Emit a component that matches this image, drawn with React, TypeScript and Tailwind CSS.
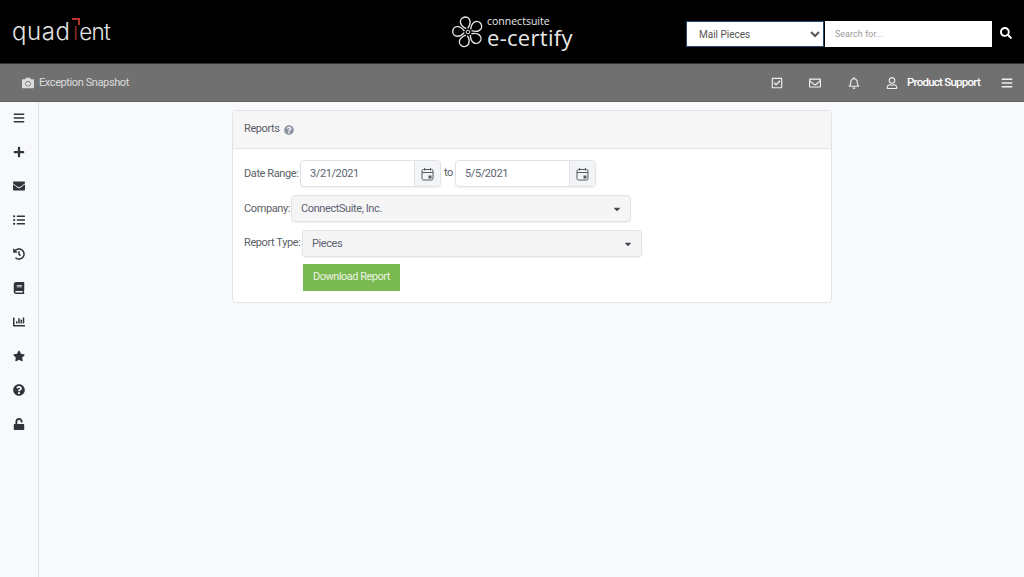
import { FaBars, FaPlus, FaEnvelope, FaListUl, FaHistory, FaBook, FaChartBar, FaStar, FaQuestionCircle, FaUnlock, FaCamera, FaSearch, FaRegCheckSquare, FaRegEnvelope, FaRegBell, FaRegUser, FaCaretDown } from "react-icons/fa";

const Cal = () => (
  <svg width="13" height="14" viewBox="0 0 13 14" fill="none" stroke="#555b66" strokeWidth="1">
    <rect x="1" y="2.5" width="11" height="10.5" rx="1.5" />
    <path d="M1 5.5h11M3.5 1v2.5M9.500 1v2.500" />
    <rect x="7.500" y="8.500" width="3" height="3" fill="#555b66" stroke="none" />
  </svg>
);

const petal = "M15.200 12.300 C13 10.500 11.200 8 11.200 5.500 A4.800 4.800 0 0 1 20.800 5.500 C20.800 8 19 10.500 16.800 12.300";
const Logo = () => (
  <svg width="32" height="32" viewBox="0 0 32 32" fill="none" stroke="#e8e8e8" strokeWidth="1.400">
    {[-15, 57, 129, 201, 273].map((r) => (
      <path key={r} d={petal} transform={`rotate(${r} 16 16)`} />
    ))}
    <circle cx="16" cy="16" r="1.800" strokeWidth="1" />
  </svg>
);

const side = [FaBars, FaPlus, FaEnvelope, FaListUl, FaHistory, FaBook, FaChartBar, FaStar, FaQuestionCircle, FaUnlock];

const DateInput = ({ value }: { value: string }) => (
  <div className="flex h-[27px] w-[141px] rounded-[4px] border border-[#e1e3e6] bg-white shadow-[0_1px_2px_rgba(0,0,0,0.06)]">
    <div className="flex-1 pl-[9px] leading-[25px] text-[#5c6370]">{value}</div>
    <div className="flex w-[26px] items-center justify-center rounded-r-[4px] border-l border-[#e1e3e6] bg-[#f3f4f5]"><Cal /></div>
  </div>
);

const FakeSelect = ({ value }: { value: string }) => (
  <div className="flex h-[27px] w-[340px] items-center justify-between rounded-[4px] border border-[#e1e3e6] bg-[#f5f5f6] pl-[9px] pr-[8px] text-[#5c6370] shadow-[0_1px_2px_rgba(0,0,0,0.06)]">
    <span className="pt-[1px]">{value}</span>
    <FaCaretDown className="text-[10px] text-[#444b55]" />
  </div>
);

export default function App() {
  return (
    <div className="flex h-[577px] w-[1024px] flex-col overflow-hidden whitespace-nowrap bg-[#f8f9fc] font-['Roboto',sans-serif] text-[11px] tracking-[-0.4px] text-[#5a5f68]">
      <header className="flex h-[64px] items-center border-b border-[#333] bg-black tracking-normal">
        <div className="flex w-[440px] items-center pl-[12px]">
          <span className="font-['Inter',sans-serif] text-[24px] font-light leading-none text-[#e4e4e4]">
            <span className="tracking-[0.6px]">quad</span>
            <span className="relative ml-[2px] mr-[1px] text-[#8a2a26]">i<span className="absolute left-[-1px] top-[1px] h-[7px] w-[8px] border-r-2 border-t-2 border-[#b8322a] bg-black" /></span>
            <span className="text-[22.500px] tracking-[-0.8px]">ent</span>
          </span>
        </div>
        <div className="flex w-[246px] items-center">
          <div className="ml-[12px]"><Logo /></div>
          <div className="ml-[3px] mt-[1px] flex flex-col font-['Open_Sans',sans-serif] text-[#e8e8e8]">
            <span className="text-[10.500px] leading-[11px]">connectsuite</span>
            <span className="text-[22px] leading-[21px] tracking-[0.3px]">e-certify</span>
          </div>
        </div>
        <select defaultValue="Mail Pieces" className="mt-[4px] h-[26px] w-[138px] border border-[#27496d] bg-white pl-[8px] pt-[1px] text-[10px] text-[#555]">
          <option>Mail Pieces</option>
        </select>
        <input placeholder="Search for..." className="ml-[1px] mt-[4px] h-[26px] w-[167px] bg-white px-[10px] pt-[1px] text-[9px] placeholder:text-[#9a9a9a]" />
        <FaSearch className="ml-[8px] mt-[3px] text-[12px] text-white" />
      </header>

      <div className="flex h-[38px] items-center border-b border-[#616161] bg-[#707070] text-[#dcdcdc]">
        <FaCamera className="ml-[22px] text-[12px]" />
        <span className="ml-[5px] pt-[1px]">Exception Snapshot</span>
        <div className="ml-auto flex items-center text-[#f0f0f0]">
          <FaRegCheckSquare className="text-[12px]" />
          <FaRegEnvelope className="ml-[26px] text-[12px]" />
          <FaRegBell className="ml-[27px] text-[12px]" />
          <FaRegUser className="ml-[26px] text-[12px]" />
          <span className="ml-[9px] text-[11.500px] font-medium tracking-[-0.75px] text-white">Product Support</span>
          <FaBars className="ml-[21px] mr-[11px] text-[12px]" />
        </div>
      </div>

      <div className="flex min-h-0 flex-1">
        <aside className="flex w-[39px] flex-col items-center gap-[20px] border-r border-[#dfe2e8] pt-[9px] text-[#30343a]">
          {side.map((I, i) => (
            <div key={i} className="flex h-[14px] items-center justify-center"><I className="text-[12px]" /></div>
          ))}
        </aside>
        <main className="flex-1 pl-[193px] pt-[8px]">
          <section className="h-[193px] w-[600px] rounded-[4px] border border-[#e3e4e6] bg-white">
            <div className="flex h-[38px] items-center border-b border-[#e3e4e6] bg-[#f6f6f6] pl-[11px]">
              <span>Reports</span>
              <FaQuestionCircle className="ml-[4px] text-[10px] text-[#8d95a5]" />
            </div>
            <div className="flex flex-col gap-[8px] pl-[11px] pt-[11px]">
              <div className="flex items-center">
                <span className="w-[56px] pt-[1px]">Date Range:</span>
                <DateInput value="3/21/2021" />
                <span className="mx-[3px] w-[8px]">to</span>
                <DateInput value="5/5/2021" />
              </div>
              <div className="flex items-center">
                <span className="w-[47px] pt-[1px]">Company:</span>
                <FakeSelect value="ConnectSuite, Inc." />
              </div>
              <div className="flex items-center">
                <span className="w-[58px]">Report Type:</span>
                <FakeSelect value="Pieces" />
              </div>
              <button className="ml-[59px] mt-[-1px] h-[27px] w-[97px] bg-[#7ab850] tracking-[-0.5px] text-[#eaf5e2]">Download Report</button>
            </div>
          </section>
        </main>
      </div>
    </div>
  );
}
